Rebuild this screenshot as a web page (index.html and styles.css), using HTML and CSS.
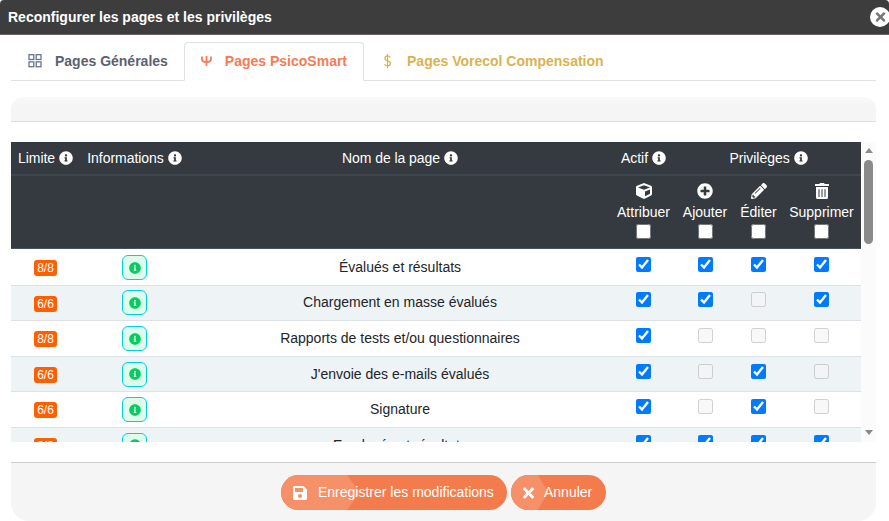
FILE: index.html
```html
<!DOCTYPE html>
<html lang="fr">
<head>
<meta charset="utf-8">
<title>Reconfigurer les pages et les privilèges</title>
<link rel="stylesheet" href="styles.css">
</head>
<body>
<svg class="defs" width="0" height="0" aria-hidden="true">
  <symbol id="i-info" viewBox="0 0 512 512"><path d="M256 8C119.043 8 8 119.083 8 256c0 136.997 111.043 248 248 248s248-111.003 248-248C504 119.083 392.957 8 256 8zm0 110c23.196 0 42 18.804 42 42s-18.804 42-42 42-42-18.804-42-42 18.804-42 42-42zm56 254c0 6.627-5.373 12-12 12h-88c-6.627 0-12-5.373-12-12v-24c0-6.627 5.373-12 12-12h12v-64h-12c-6.627 0-12-5.373-12-12v-24c0-6.627 5.373-12 12-12h64c6.627 0 12 5.373 12 12v100h12c6.627 0 12 5.373 12 12v24z"/></symbol>
  <symbol id="i-cube" viewBox="0 0 512 512"><path d="M239.1 6.3l-208 78c-18.7 7-31.1 25-31.1 45v225.1c0 18.2 10.3 34.8 26.5 42.9l208 104c13.5 6.8 29.4 6.8 42.9 0l208-104c16.3-8.1 26.5-24.8 26.5-42.9V129.3c0-20-12.4-37.9-31.1-44.9l-208-78C262 2.2 250 2.2 239.1 6.3zM256 68.4l192 72v1.1l-192 78-192-78v-1.1l192-72zm32 356V275.5l160-65v133.9l-160 80z"/></symbol>
  <symbol id="i-plus" viewBox="0 0 512 512"><path d="M256 8C119 8 8 119 8 256s111 248 248 248 248-111 248-248S393 8 256 8zm144 276c0 6.6-5.4 12-12 12h-92v92c0 6.6-5.4 12-12 12h-56c-6.6 0-12-5.4-12-12v-92h-92c-6.6 0-12-5.4-12-12v-56c0-6.6 5.4-12 12-12h92v-92c0-6.6 5.4-12 12-12h56c6.6 0 12 5.4 12 12v92h92c6.6 0 12 5.4 12 12v56z"/></symbol>
  <symbol id="i-pencil" viewBox="0 0 512 512"><path d="M497.9 142.1l-46.1 46.1c-4.7 4.7-12.3 4.7-17 0l-111-111c-4.7-4.7-4.7-12.3 0-17l46.1-46.1c18.7-18.7 49.1-18.7 67.9 0l60.1 60.1c18.8 18.7 18.8 49.1 0 67.9zM284.2 99.8L21.6 362.4.4 483.9c-2.9 16.4 11.4 30.6 27.8 27.8l121.5-21.3 262.6-262.6c4.7-4.7 4.7-12.3 0-17l-111-111c-4.8-4.7-12.4-4.7-17.1 0zM124.1 339.9c-5.5-5.5-5.5-14.3 0-19.8l154-154c5.5-5.5 14.3-5.5 19.8 0s5.5 14.3 0 19.8l-154 154c-5.5 5.5-14.3 5.5-19.8 0zM88 424h48v36.3l-64.5 11.3-31.1-31.1L51.7 376H88v48z"/></symbol>
  <symbol id="i-trash" viewBox="0 0 448 512"><path d="M32 464a48 48 0 0 0 48 48h288a48 48 0 0 0 48-48V128H32zm272-256a16 16 0 0 1 32 0v224a16 16 0 0 1-32 0zm-96 0a16 16 0 0 1 32 0v224a16 16 0 0 1-32 0zm-96 0a16 16 0 0 1 32 0v224a16 16 0 0 1-32 0zM432 32H312l-9.4-18.7A24 24 0 0 0 281.1 0H166.8a23.72 23.72 0 0 0-21.4 13.3L136 32H16A16 16 0 0 0 0 48v32a16 16 0 0 0 16 16h416a16 16 0 0 0 16-16V48a16 16 0 0 0-16-16z"/></symbol>
  <symbol id="i-save" viewBox="0 0 448 512"><path d="M433.941 129.941l-83.882-83.882A48 48 0 0 0 316.118 32H48C21.49 32 0 53.49 0 80v352c0 26.51 21.49 48 48 48h352c26.51 0 48-21.49 48-48V163.882a48 48 0 0 0-14.059-33.941zM224 416c-35.346 0-64-28.654-64-64 0-35.346 28.654-64 64-64s64 28.654 64 64c0 35.346-28.654 64-64 64zm96-304.52V212c0 6.627-5.373 12-12 12H76c-6.627 0-12-5.373-12-12V108c0-6.627 5.373-12 12-12h228.52c3.183 0 6.235 1.264 8.485 3.515l3.48 3.48A11.996 11.996 0 0 1 320 111.48z"/></symbol>
  <symbol id="i-times" viewBox="0 0 352 512"><path d="M242.72 256l100.07-100.07c12.28-12.28 12.28-32.19 0-44.48l-22.24-22.24c-12.28-12.28-32.19-12.28-44.48 0L176 189.28 75.93 89.21c-12.28-12.28-32.19-12.28-44.48 0L9.21 111.45c-12.28 12.28-12.28 32.19 0 44.48L109.28 256 9.21 356.07c-12.28 12.28-12.28 32.19 0 44.48l22.24 22.24c12.28 12.28 32.2 12.28 44.48 0L176 322.72l100.07 100.07c12.28 12.28 32.2 12.28 44.48 0l22.24-22.24c12.28-12.28 12.28-32.19 0-44.48L242.72 256z"/></symbol>
</svg>

<div class="modal">
  <header class="modal-head">
    <h1 class="modal-title">Reconfigurer les pages et les privilèges</h1>
    <button class="close" type="button" aria-label="Fermer"><svg class="close-icon"><use href="#i-times"/></svg></button>
  </header>

  <nav class="tabs">
    <a class="tab tab-general">
      <svg class="tab-icon icon-grid" viewBox="0 0 14 14"><g fill="none" stroke="currentColor" stroke-width="1.3"><rect x="1" y="0.7" width="4.8" height="4.8"/><rect x="8.2" y="0.7" width="4.8" height="4.8"/><rect x="1" y="7.9" width="4.8" height="4.8"/><rect x="8.2" y="7.9" width="4.8" height="4.8"/></g></svg>
      Pages Générales
    </a>
    <a class="tab tab-psico">
      <svg class="tab-icon icon-psi" viewBox="0 0 11 14"><path d="M1 2.6 v2.4 q0 3 4.5 3 q4.5 0 4.5-3 v-2.4 M5.5 2 v10" fill="none" stroke="currentColor" stroke-width="1.8"/></svg>
      Pages PsicoSmart
    </a>
    <a class="tab tab-vorecol">
      <svg class="tab-icon icon-dollar" viewBox="0 0 13 14"><path d="M9.4 3.4 q-0.7-1.5-2.9-1.5 q-2.6 0-2.6 2.3 q0 1.9 2.6 2.6 q2.9 .8 2.9 2.8 q0 2.3-2.9 2.3 q-2.3 0-3-1.7 M6.5 0 v14" fill="none" stroke="currentColor" stroke-width="1.2"/></svg>
      Pages Vorecol Compensation
    </a>
  </nav>

  <div class="filter-bar"></div>

  <div class="table-wrap">
    <div class="table">
      <div class="thead">
        <div class="row head-row">
          <div class="th">Limite <svg class="info"><use href="#i-info"/></svg></div>
          <div class="th">Informations <svg class="info"><use href="#i-info"/></svg></div>
          <div class="th">Nom de la page <svg class="info"><use href="#i-info"/></svg></div>
          <div class="th">Actif <svg class="info"><use href="#i-info"/></svg></div>
          <div class="th span3">Privilèges <svg class="info"><use href="#i-info"/></svg></div>
        </div>
        <div class="row priv-row">
          <div class="span3 blank"></div>
          <label class="priv"><svg class="priv-icon"><use href="#i-cube"/></svg><span>Attribuer</span><input class="check" type="checkbox"></label>
          <label class="priv"><svg class="priv-icon"><use href="#i-plus"/></svg><span>Ajouter</span><input class="check" type="checkbox"></label>
          <label class="priv"><svg class="priv-icon"><use href="#i-pencil"/></svg><span>Éditer</span><input class="check" type="checkbox"></label>
          <label class="priv"><svg class="priv-icon"><use href="#i-trash"/></svg><span>Supprimer</span><input class="check" type="checkbox"></label>
        </div>
      </div>
      <div class="tbody">
        <div class="row body-row">
          <div class="cell limit"><span class="badge">8/8</span></div>
          <div class="cell info-cell"><span class="info-box"><svg class="info-dot"><use href="#i-info"/></svg></span></div>
          <div class="cell name">Évalués et résultats</div>
          <div class="cell box"><input class="check" type="checkbox" checked></div>
          <div class="cell box"><input class="check" type="checkbox" checked></div>
          <div class="cell box"><input class="check" type="checkbox" checked></div>
          <div class="cell box"><input class="check" type="checkbox" checked></div>
        </div>
        <div class="row body-row">
          <div class="cell limit"><span class="badge">6/6</span></div>
          <div class="cell info-cell"><span class="info-box"><svg class="info-dot"><use href="#i-info"/></svg></span></div>
          <div class="cell name">Chargement en masse évalués</div>
          <div class="cell box"><input class="check" type="checkbox" checked></div>
          <div class="cell box"><input class="check" type="checkbox" checked></div>
          <div class="cell box"><input class="check" type="checkbox" disabled></div>
          <div class="cell box"><input class="check" type="checkbox" checked></div>
        </div>
        <div class="row body-row">
          <div class="cell limit"><span class="badge">8/8</span></div>
          <div class="cell info-cell"><span class="info-box"><svg class="info-dot"><use href="#i-info"/></svg></span></div>
          <div class="cell name">Rapports de tests et/ou questionnaires</div>
          <div class="cell box"><input class="check" type="checkbox" checked></div>
          <div class="cell box"><input class="check" type="checkbox" disabled></div>
          <div class="cell box"><input class="check" type="checkbox" disabled></div>
          <div class="cell box"><input class="check" type="checkbox" disabled></div>
        </div>
        <div class="row body-row">
          <div class="cell limit"><span class="badge">6/6</span></div>
          <div class="cell info-cell"><span class="info-box"><svg class="info-dot"><use href="#i-info"/></svg></span></div>
          <div class="cell name">J'envoie des e-mails évalués</div>
          <div class="cell box"><input class="check" type="checkbox" checked></div>
          <div class="cell box"><input class="check" type="checkbox" disabled></div>
          <div class="cell box"><input class="check" type="checkbox" checked></div>
          <div class="cell box"><input class="check" type="checkbox" disabled></div>
        </div>
        <div class="row body-row">
          <div class="cell limit"><span class="badge">6/6</span></div>
          <div class="cell info-cell"><span class="info-box"><svg class="info-dot"><use href="#i-info"/></svg></span></div>
          <div class="cell name">Signature</div>
          <div class="cell box"><input class="check" type="checkbox" checked></div>
          <div class="cell box"><input class="check" type="checkbox" disabled></div>
          <div class="cell box"><input class="check" type="checkbox" checked></div>
          <div class="cell box"><input class="check" type="checkbox" disabled></div>
        </div>
        <div class="row body-row">
          <div class="cell limit"><span class="badge">8/8</span></div>
          <div class="cell info-cell"><span class="info-box"><svg class="info-dot"><use href="#i-info"/></svg></span></div>
          <div class="cell name">Employés et résultats</div>
          <div class="cell box"><input class="check" type="checkbox" checked></div>
          <div class="cell box"><input class="check" type="checkbox" checked></div>
          <div class="cell box"><input class="check" type="checkbox" checked></div>
          <div class="cell box"><input class="check" type="checkbox" checked></div>
        </div>
      </div>
    </div>
    <div class="scrollbar">
      <span class="arrow arrow-up"></span>
      <span class="thumb"></span>
      <span class="arrow arrow-down"></span>
    </div>
  </div>

  <footer class="modal-foot">
    <button class="btn btn-save" type="button"><svg class="btn-icon"><use href="#i-save"/></svg><span class="btn-label">Enregistrer les modifications</span></button>
    <button class="btn btn-cancel" type="button"><svg class="btn-icon"><use href="#i-times"/></svg><span class="btn-label">Annuler</span></button>
  </footer>
</div>
</body>
</html>
```

FILE: styles.css
```css
* { box-sizing: border-box; }
html, body { margin: 0; height: 100%; }
body { background: #fff; font-family: "Liberation Sans", Arial, sans-serif; font-size: 14px; color: #212529; overflow: hidden; }
.defs { position: absolute; }
svg { fill: currentColor; }

.modal { width: 889px; height: 521px; display: flex; flex-direction: column; border-radius: 4px 4px 0 0; position: relative; overflow: hidden; }

.modal-head { height: 35px; flex: none; background: #3d3d3d; border-bottom: 1px solid #6b6466; display: flex; align-items: center; padding: 0 8px 1px; }
.modal-title { margin: 0; font-size: 14px; line-height: 20px; font-weight: 700; color: #fff; }
.close { position: absolute; top: 7px; right: -1px; width: 20px; height: 20px; border: 0; padding: 0; border-radius: 50%; background: #fff; color: #777; display: flex; align-items: center; justify-content: center; }
.close-icon { width: 11px; height: 14px; }

.tabs { flex: none; display: flex; height: 46px; margin: 0 13px 0 11px; padding-top: 7px; border-bottom: 1px solid #dee2e6; }
.tab { display: flex; align-items: center; gap: 13px; height: 39px; padding: 0 16px 2px; margin-bottom: -1px; font-weight: 700; font-size: 14px; border: 1px solid transparent; border-radius: 4px 4px 0 0; white-space: nowrap; }
.tab-icon { height: 14px; flex: none; }
.icon-grid { width: 14px; }
.icon-psi { width: 11px; }
.icon-dollar { width: 13px; }
.tab-general { color: #5c6170; padding-right: 15px; }
.tab-general .tab-icon { color: #66758c; }
.tab-psico { color: #f77b55; background: #fff; border-color: #dee2e6 #dee2e6 #fff; }
.tab-vorecol { color: #dbb24f; }

.filter-bar { flex: none; height: 25px; margin: 16px 13px 20px 11px; background: linear-gradient(#f9f9f9, #f5f5f5 40%); border-bottom: 1px solid #ddd; border-radius: 12px 12px 0 0; }

.table-wrap { flex: none; display: flex; height: 300px; margin: 0 13px 0 11px; overflow: hidden; }
.table { width: 850px; flex: none; }

.row { display: grid; grid-template-columns: 69px 109px 422px 65px 58px 49px 78px; }
.thead { background: #343a40; color: #fff; }
.head-row { height: 34px; border-bottom: 2px solid #3e474e; }
.th { display: flex; align-items: center; justify-content: center; gap: 4px; letter-spacing: -0.05px; }
.span3 { grid-column: span 3; }
.info { width: 14px; height: 14px; flex: none; }
.priv-row { height: 73px; border-bottom: 1px solid #4a525a; }
.priv { display: flex; flex-direction: column; align-items: center; padding-top: 7px; white-space: nowrap; line-height: 20px; }
.priv:last-child { width: 77px; }
.priv-icon { width: 16px; height: 16px; margin-bottom: 3px; }
.priv .check { margin: 2px 0 0; }

.check { width: 15px; height: 15px; margin: 0; accent-color: #007bff; }

.tbody { padding-top: 1px; }
.body-row { height: 35.5px; border-bottom: 1px solid #dee2e6; }
.body-row:nth-child(even) { background: #eef3f6; }
.cell { display: flex; align-items: center; justify-content: center; }
.limit { padding-top: 1.5px; }
.info-cell { padding-top: 0.6px; }
.box { align-items: flex-start; padding-top: 7px; }
.box:last-child { width: 77px; }
.body-row:nth-child(2) .info-cell { padding-top: 0; }
.body-row:nth-child(2) .name { padding-bottom: 1px; }
.body-row:nth-child(2) .box { padding-top: 6.4px; }
.badge { width: 23px; height: 16px; border-radius: 3px; background: #ff5f00; color: #fff; font-size: 12px; font-weight: 400; line-height: 16px; text-align: center; }
.info-box { width: 25px; height: 25px; border: 1px solid #00cfe0; border-radius: 6px; background: #dffbe9; color: #04cc62; display: flex; align-items: center; justify-content: center; }
.info-dot { width: 12px; height: 12px; }

.scrollbar { width: 15px; flex: none; background: #fbfbfb; display: flex; flex-direction: column; align-items: center; padding-top: 6px; }
.arrow { width: 0; height: 0; border-left: 4.5px solid transparent; border-right: 4.5px solid transparent; flex: none; }
.arrow-up { border-bottom: 5px solid #8a8a8a; }
.arrow-down { border-top: 5px solid #8a8a8a; margin-top: 186px; }
.thumb { width: 9px; height: 84px; border-radius: 5px; background: #8a8a8a; margin-top: 7px; flex: none; }

.modal-foot { flex: none; height: 79px; margin: 0 13px 0 11px; padding-top: 33px; display: flex; justify-content: center; align-items: flex-start; gap: 4px; background: linear-gradient(#fff 20px, #ccc 20px, #ccc 21px, #f5f5f5 21px); border-radius: 0 0 18px 18px; }
.btn { position: relative; height: 35px; border: 0; border-radius: 18px; background: #f47c4c; color: #fff; font: 14px/35px "Liberation Sans", Arial, sans-serif; display: flex; align-items: center; overflow: hidden; padding: 0 12px; white-space: nowrap; }
.btn-save { width: 226px; }
.btn-cancel { width: 95px; }
.btn::before { content: ""; position: absolute; left: 0; top: 0; bottom: 0; background: #f59068; }
.btn-save::before { width: 79px; clip-path: polygon(0 0, 66px 0, 79px 50%, 66px 100%, 0 100%); }
.btn-cancel::before { width: 37px; clip-path: polygon(0 0, 27px 0, 37px 50%, 27px 100%, 0 100%); }
.btn-icon { position: relative; height: 16px; flex: none; }
.btn-save .btn-icon { width: 14px; margin-right: 11px; }
.btn-cancel .btn-icon { width: 11px; margin-right: 10px; }
.btn-label { position: relative; }
```
